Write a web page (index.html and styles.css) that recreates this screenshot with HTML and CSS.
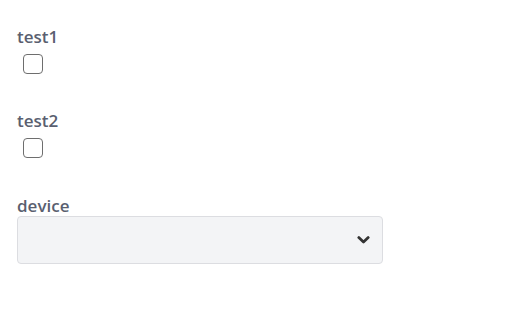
FILE: index.html
```html
<!DOCTYPE html>
<html lang="en">
<head>
<meta charset="utf-8">
<link rel="stylesheet" href="styles.css">
</head>
<body>
<form class="form">
  <div class="field">
    <label class="label" for="test1">test1</label>
    <span class="checkbox" id="test1"></span>
  </div>
  <div class="field">
    <label class="label" for="test2">test2</label>
    <span class="checkbox" id="test2"></span>
  </div>
  <div class="field">
    <label class="label label-select" for="device">device</label>
    <div class="select" id="device">
      <svg class="chevron" width="13" height="8" viewBox="0 0 13 8"><path d="M1.8 1.6 L6.5 6 L11.2 1.6" fill="none" stroke="#333" stroke-width="2.8" stroke-linecap="round" stroke-linejoin="round"/></svg>
    </div>
  </div>
</form>
</body>
</html>
```
FILE: styles.css
```css
html, body {
  margin: 0;
  padding: 0;
  background: #ffffff;
}
.form {
  padding: 25px 17px 0 17px;
  display: flex;
  flex-direction: column;
  font-family: "Open Sans", sans-serif;
}
.field {
  display: flex;
  flex-direction: column;
  align-items: flex-start;
  height: 84px;
}
.label {
  font-size: 17px;
  font-weight: 600;
  color: #5a5f70;
  line-height: 24px;
  margin-bottom: 5px;
}
.label-select {
  margin-top: 1px;
  margin-bottom: -2px;
}
.checkbox {
  display: block;
  box-sizing: border-box;
  width: 20px;
  height: 20px;
  margin-left: 6px;
  border: 1.5px solid #6e6e6e;
  border-radius: 4px;
  background: #fff;
}
.select {
  box-sizing: border-box;
  width: 366px;
  height: 48px;
  background: #f3f4f6;
  border: 1px solid #dcdde1;
  border-radius: 4px;
  display: flex;
  align-items: center;
  justify-content: flex-end;
  padding-right: 12px;
}
.chevron {
  display: block;
}
```
